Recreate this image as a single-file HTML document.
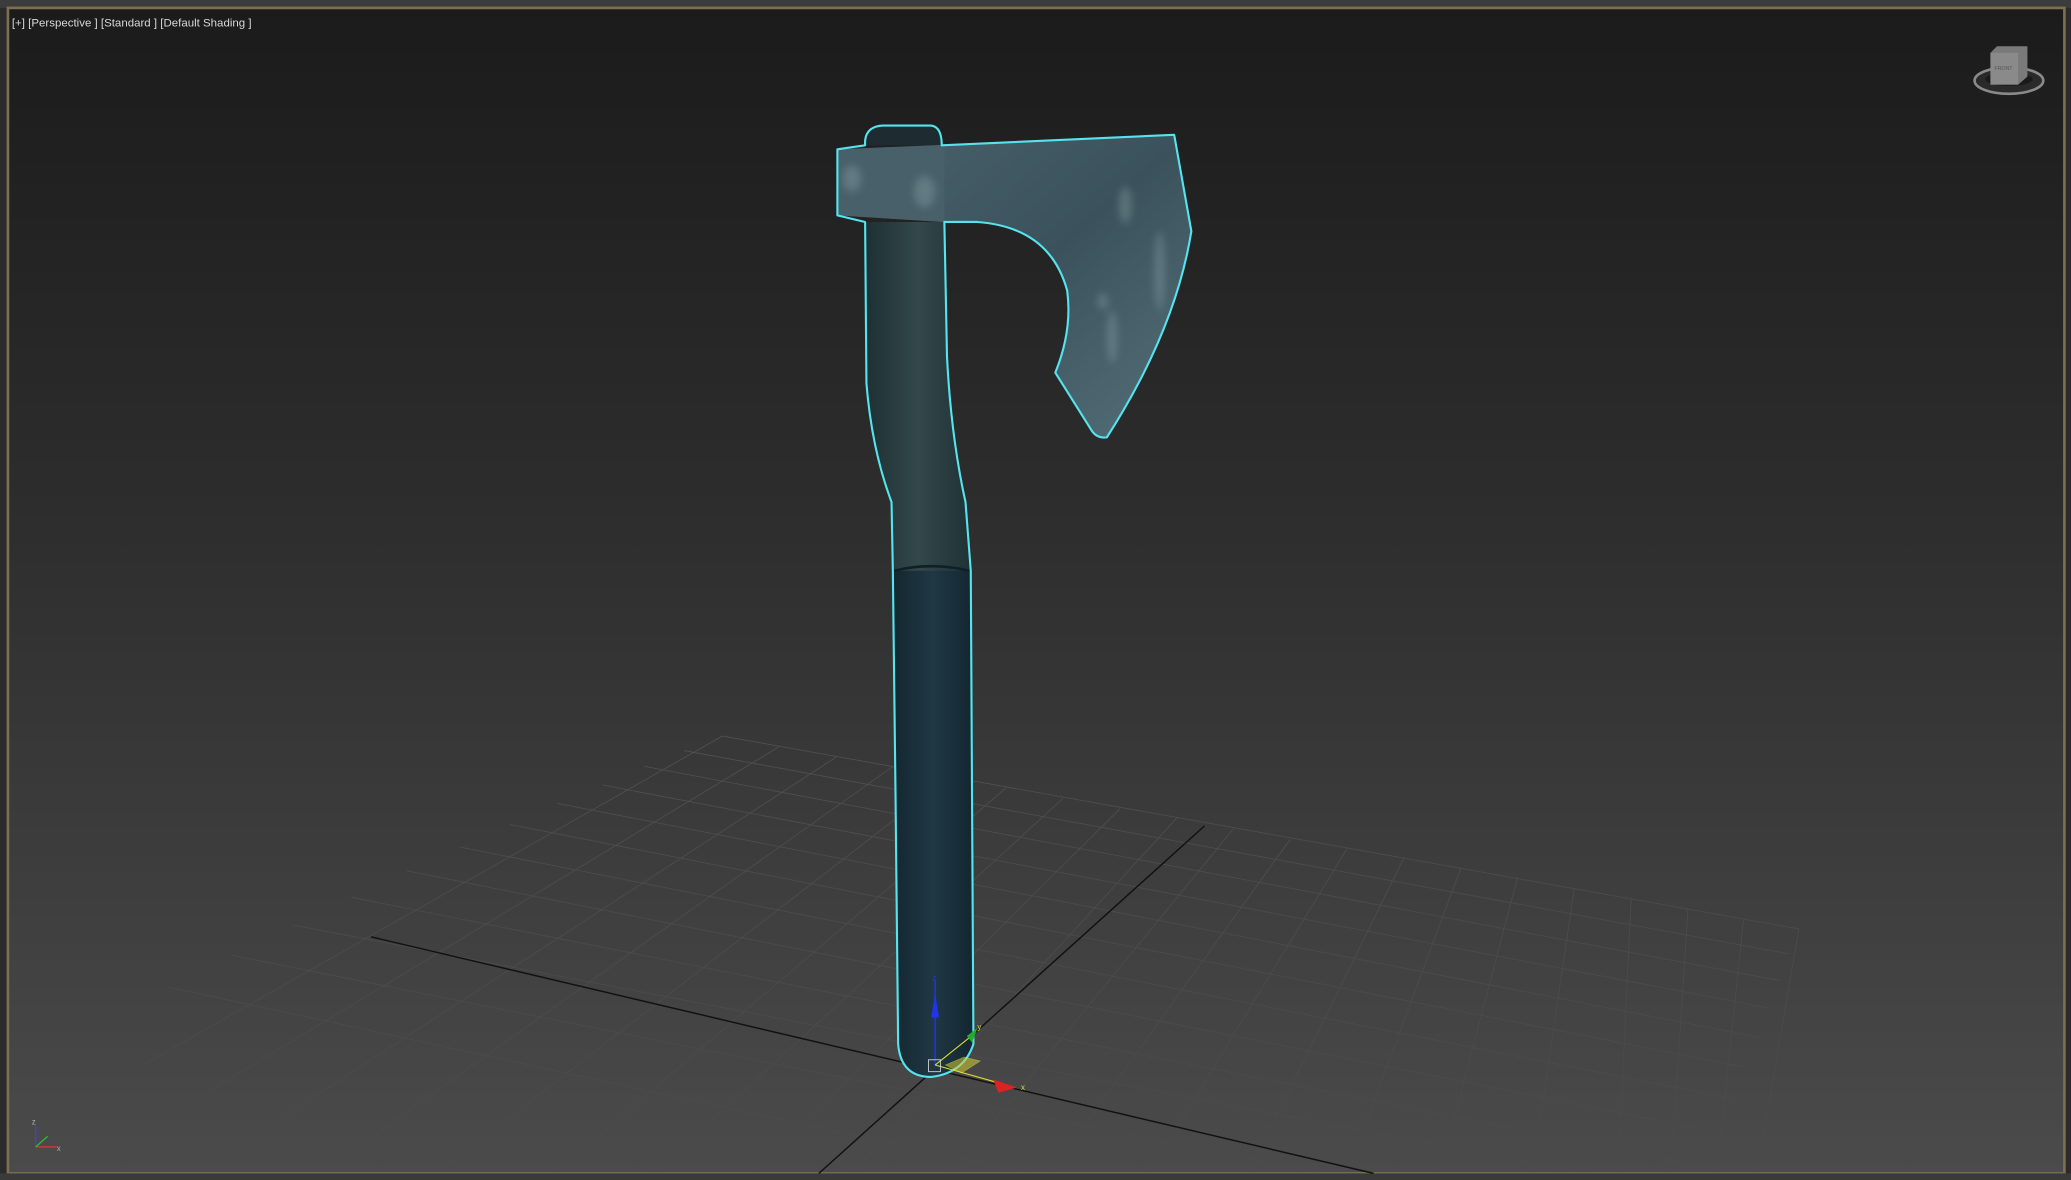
<!DOCTYPE html>
<html><head><meta charset="utf-8"><style>
html,body{margin:0;padding:0;background:#3a3a3a;}
svg{display:block}
</style></head><body>
<svg width="2071" height="1180" viewBox="0 0 1568 893" preserveAspectRatio="none" xmlns="http://www.w3.org/2000/svg">
<defs>
<linearGradient id="bg" x1="0" y1="0" x2="0" y2="1">
<stop offset="0" stop-color="#1b1b1b"/><stop offset="0.45" stop-color="#2e2e2e"/><stop offset="1" stop-color="#4b4b4b"/>
</linearGradient>
<linearGradient id="blade" x1="0" y1="0" x2="1" y2="1">
<stop offset="0" stop-color="#4a626c"/><stop offset="0.5" stop-color="#3b525c"/><stop offset="1" stop-color="#55707a"/>
</linearGradient>
<linearGradient id="handle" x1="0" y1="0" x2="1" y2="0">
<stop offset="0" stop-color="#1d3033"/><stop offset="0.5" stop-color="#33484a"/><stop offset="1" stop-color="#1f3236"/>
</linearGradient>
<linearGradient id="grip" x1="0" y1="0" x2="1" y2="0">
<stop offset="0" stop-color="#142730"/><stop offset="0.5" stop-color="#1f3844"/><stop offset="1" stop-color="#132630"/>
</linearGradient>
<linearGradient id="gridfade" x1="0" y1="0" x2="0" y2="1">
<stop offset="0" stop-color="#fff" stop-opacity="1"/><stop offset="1" stop-color="#fff" stop-opacity="0.1"/>
</linearGradient>
<mask id="gm"><rect x="0" y="550" width="1568" height="343" fill="url(#gridfade)"/></mask>
<filter id="blur"><feGaussianBlur stdDeviation="3"/></filter>
</defs>
<rect width="1568" height="893" fill="#2b2b2b"/>
<rect x="0" y="0" width="1568" height="6" fill="#3c3c3c"/>
<rect x="6" y="6" width="1557" height="882" fill="url(#bg)" stroke="#7d7050" stroke-width="2"/>
<rect x="0" y="888" width="1568" height="5" fill="#3a3a3a"/>
<text x="9" y="20" font-family="Liberation Sans, sans-serif" font-size="8.7" fill="#d8d8d8">[+] [Perspective ] [Standard ] [Default Shading ]</text>
<!-- grid -->
<g stroke="#5a5a5a" stroke-width="0.6" fill="none" mask="url(#gm)" opacity="0.8">
<path d="M547,557 L1362,703 M518,568 L1355,722 M488,580 L1347,742 M456,594 L1340,763 M422,608 L1332,785 M386,624 L1323,808 M348,641 L1314,832 M308,659 L1305,858 M266,679 L1295,884 M222,700 L1200,888 M176,723 L1000,888 M128,747 L780,888"/>
<path d="M547,557 L110,805 M590,565 L160,825 M633,573 L215,845 M676,580 L275,865 M719,588 L335,885 M762,596 L420,888 M805,604 L495,888 M848,612 L570,888 M891,619 L645,888 M934,627 L720,888 M977,635 L795,888 M1020,642 L870,888 M1063,649 L945,888 M1106,657 L1020,888 M1149,664 L1090,888 M1192,672 L1160,888 M1235,680 L1225,888 M1278,688 L1265,888 M1320,696 L1300,888 M1362,703 L1330,888"/>
</g>
<g stroke="#111" stroke-width="1.1">
<line x1="281" y1="709" x2="1040" y2="888"/>
<line x1="912" y1="625" x2="620" y2="888"/>
</g>
<!-- handle -->
<path d="M655,168 L656,290 Q660,340 675,380 L676,432 L735,432 L731,380 Q720,330 717,270 L715,168 Z" fill="url(#handle)"/>
<path d="M676,432 L678,600 L680,790 Q682,815 705,815 Q730,812 737,790 L735,432 Z" fill="url(#grip)"/>
<path d="M677,432 Q705,425 734,432" stroke="#0f2028" stroke-width="2" fill="none"/>
<!-- head -->
<path d="M655,110 Q654,96 668,95 L705,95 Q713,96 713,110 Z" fill="#1e2c31"/>
<path d="M634,113 L889,102 L902,175 Q890,250 838,331 Q830,332 826,325 L799,282 Q812,250 808,220 Q795,172 740,168 L715,168 L634,163 Z" fill="url(#blade)"/>
<path d="M634,113 L715,110 L715,168 L634,163 Z" fill="#48606a"/>
<g fill="#9fb6bc" opacity="0.3" filter="url(#blur)">
<ellipse cx="700" cy="145" rx="8" ry="12"/><ellipse cx="645" cy="135" rx="7" ry="10"/>
<ellipse cx="852" cy="155" rx="5" ry="14"/><ellipse cx="842" cy="255" rx="4" ry="20"/>
<ellipse cx="878" cy="205" rx="4" ry="30"/><ellipse cx="835" cy="228" rx="4" ry="6"/>
</g>
<!-- outline -->
<path d="M655,168 L656,290 Q660,340 675,380 L676,432 L678,600 L680,790 Q682,815 705,815 Q730,812 737,790 L735,432 L731,380 Q720,330 717,270 L715,168 L740,168 Q795,172 808,220 Q812,250 799,282 L826,325 Q830,332 838,331 Q890,250 902,175 L889,102 L713,110 Q713,96 705,95 L668,95 Q654,96 655,110 L634,113 L634,163 Z" fill="none" stroke="#55e4ee" stroke-width="1.6" stroke-linejoin="round"/>
<!-- gizmo -->
<line x1="708" y1="742" x2="708" y2="806" stroke="#2233dd" stroke-width="1.2"/>
<path d="M705,770 L708,752 L711,770 Z" fill="#2233ee"/>
<text x="706" y="742" font-family="Liberation Sans, sans-serif" font-size="6" fill="#2233ee">z</text>
<line x1="708" y1="806" x2="738" y2="782" stroke="#dddd33" stroke-width="0.8"/>
<path d="M732,784 L740,778 L736,789 Z" fill="#22aa33"/>
<text x="740" y="779" font-family="Liberation Sans, sans-serif" font-size="6" fill="#dddd33">y</text>
<line x1="708" y1="806" x2="765" y2="822" stroke="#dddd33" stroke-width="0.8"/>
<path d="M752,817 L770,823 L756,827 Z" fill="#dd2222"/>
<text x="773" y="825" font-family="Liberation Sans, sans-serif" font-size="6" fill="#dddd33">x</text>
<path d="M716,806 L730,800 L742,803 L728,812 Z" fill="#d8cc33" opacity="0.55" stroke="#eeee44" stroke-width="0.6"/>
<rect x="703" y="802" width="9" height="9" fill="none" stroke="#cccccc" stroke-width="0.7"/>
<!-- bottom-left axis tripod -->
<line x1="27" y1="868" x2="27" y2="851" stroke="#3344ee" stroke-width="1"/>
<line x1="27" y1="868" x2="43" y2="868" stroke="#dd3333" stroke-width="1"/>
<line x1="27" y1="868" x2="36" y2="860" stroke="#33bb33" stroke-width="1"/>
<text x="24" y="851" font-family="Liberation Sans, sans-serif" font-size="6" fill="#aaa">z</text>
<text x="43" y="871" font-family="Liberation Sans, sans-serif" font-size="6" fill="#aaa">x</text>
<!-- viewcube -->
<ellipse cx="1521" cy="61" rx="26" ry="10" fill="#2a2a2a" stroke="#8a8a8a" stroke-width="2"/>
<ellipse cx="1521" cy="60" rx="18" ry="5" fill="#1a1a1a"/>
<path d="M1507,40 L1512,35 L1535,35 L1535,58 L1528,64 L1507,64 Z" fill="#7a7a7a"/>
<path d="M1507,40 L1528,40 L1528,64 L1507,64 Z" fill="#8a8a8a"/>
<text x="1510" y="53" font-family="Liberation Sans, sans-serif" font-size="4" fill="#555">FRONT</text>
</svg>
</body></html>
